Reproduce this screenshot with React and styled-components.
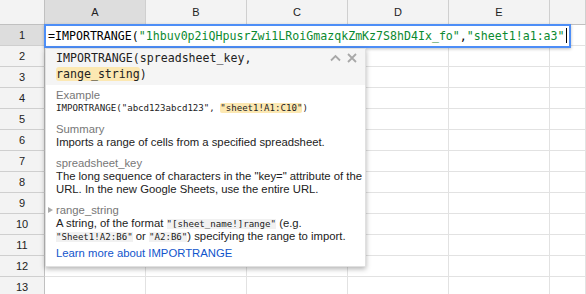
import React from 'react';
import styled, { createGlobalStyle } from 'styled-components';

const Global = createGlobalStyle`
  html, body { margin: 0; padding: 0; background: #fff; overflow: hidden; }
  body { font-family: "Liberation Sans", Arial, sans-serif; }
`;

const MONO = `"DejaVu Sans Mono", "Liberation Mono", monospace`;

const Sheet = styled.div`
  position: relative;
  width: 586px;
  height: 294px;
  overflow: hidden;
`;

const Grid = styled.div`
  display: grid;
  grid-template-columns: 45px repeat(5, 101px) 1fr;
  grid-template-rows: 25px;
  grid-auto-rows: 21px;
`;

const Corner = styled.div`
  box-sizing: border-box;
  background: #f3f3f3;
  border-right: 1px solid #c0c0c0;
  border-bottom: 1px solid #c0c0c0;
`;

const ColHead = styled.div`
  box-sizing: border-box;
  background: ${(p) => (p.$active ? '#dddddd' : '#f3f3f3')};
  border-right: 1px solid #cfcfcf;
  border-bottom: 1px solid #c0c0c0;
  display: flex;
  align-items: center;
  justify-content: center;
  font-size: 11px;
  color: #222;
`;

const RowHead = styled.div`
  box-sizing: border-box;
  background: ${(p) => (p.$active ? '#dddddd' : '#f3f3f3')};
  border-right: 1px solid #c0c0c0;
  border-bottom: 1px solid #cfcfcf;
  display: flex;
  align-items: center;
  justify-content: center;
  font-size: 11px;
  color: #222;
`;

const Cell = styled.div`
  box-sizing: border-box;
  border-right: 1px solid #e2e2e2;
  border-bottom: 1px solid #e2e2e2;
`;

const Editor = styled.div`
  position: absolute;
  left: 44px;
  top: 24px;
  width: 527px;
  height: 24px;
  box-sizing: border-box;
  border: 2px solid #4d8ef7;
  background: #fff;
  box-shadow: 0 1px 3px rgba(0, 0, 0, 0.25);
  padding-left: 2px;
  font-family: ${MONO};
  font-size: 11.6px;
  line-height: 20px;
  color: #000;
  white-space: nowrap;
`;

const Str = styled.span`
  color: #0b8a30;
`;

const Cursor = styled.span`
  display: inline-block;
  width: 1px;
  height: 15px;
  background: #000;
  vertical-align: -3px;
  margin-left: 1px;
`;

const Popover = styled.div`
  position: absolute;
  left: 45px;
  top: 48px;
  width: 321px;
  background: #fff;
  box-shadow: 0 2px 5px rgba(0, 0, 0, 0.3);
  border: 1px solid rgba(0, 0, 0, 0.12);
  box-sizing: border-box;
`;

const PopHeader = styled.div`
  display: flex;
  justify-content: space-between;
  align-items: flex-start;
  background: #f5f5f5;
  padding: 1px 8px 3px 10px;
`;

const Signature = styled.div`
  font-family: ${MONO};
  font-size: 11.6px;
  line-height: 16px;
  color: #222;
`;

const ParamHi = styled.span`
  background: #fce8b2;
  border-radius: 3px;
`;

const Controls = styled.div`
  display: flex;
  gap: 6px;
  align-items: center;
  padding-top: 3px;
`;

const Body = styled.div`
  padding: 4px 2px 6px 10px;
  display: flex;
  flex-direction: column;
  gap: 8px;
  font-size: 11.3px;
  line-height: 13px;
  color: #222;
`;

const Section = styled.div`
  position: relative;
  display: flex;
  flex-direction: column;
`;

const Label = styled.div`
  color: #777;
`;

const Text = styled.div`
  color: #222;
  white-space: nowrap;
`;

const CodeLine = styled.div`
  font-family: ${MONO};
  font-size: 9.1px;
  line-height: 13px;
  color: #222;
`;

const CodeHi = styled.span`
  background: #fce8b2;
  border-radius: 2px;
`;

const Code = styled.span`
  font-family: ${MONO};
  font-size: 9.1px;
  line-height: 1;
  background: #f1f1f1;
  color: #222;
`;

const Arrow = styled.span`
  position: absolute;
  left: -8px;
  top: 3px;
  width: 0;
  height: 0;
  border-top: 3.5px solid transparent;
  border-bottom: 3.5px solid transparent;
  border-left: 5px solid #aaa;
`;

const LearnMore = styled.a`
  color: #1155cc;
  text-decoration: none;
  margin-top: -4px;
`;

const cols = ['A', 'B', 'C', 'D', 'E', ''];

export default function App() {
  const rows = Array.from({ length: 13 }, (_, i) => i + 1);
  return (
    <Sheet>
      <Global />
      <Grid>
        <Corner />
        {cols.map((c, i) => (
          <ColHead key={c + i} $active={c === 'A'}>
            {c}
          </ColHead>
        ))}
        {rows.map((r) => (
          <React.Fragment key={r}>
            <RowHead $active={r === 1}>{r}</RowHead>
            {cols.map((c, i) => (
              <Cell key={i} />
            ))}
          </React.Fragment>
        ))}
      </Grid>

      <Editor>
        =IMPORTRANGE(<Str>"1hbuv0p2iQHpusrZwi1LRoiGmazqkZmKz7S8hD4Ix_fo"</Str>,
        <Str>"sheet1!a1:a3"</Str>
        <Cursor />
      </Editor>

      <Popover>
        <PopHeader>
          <Signature>
            IMPORTRANGE(spreadsheet_key,
            <br />
            <ParamHi>range_string</ParamHi>)
          </Signature>
          <Controls>
            <svg width="11" height="8" viewBox="0 0 11 8">
              <path d="M1 6.5 L5.5 2 L10 6.5" fill="none" stroke="#a8a8a8" strokeWidth="1.8" />
            </svg>
            <svg width="10" height="10" viewBox="0 0 10 10">
              <path d="M1 1 L9 9 M9 1 L1 9" fill="none" stroke="#a8a8a8" strokeWidth="1.8" />
            </svg>
          </Controls>
        </PopHeader>
        <Body>
          <Section>
            <Label>Example</Label>
            <CodeLine>
              IMPORTRANGE("abcd123abcd123", <CodeHi>"sheet1!A1:C10"</CodeHi>)
            </CodeLine>
          </Section>
          <Section>
            <Label>Summary</Label>
            <Text>Imports a range of cells from a specified spreadsheet.</Text>
          </Section>
          <Section>
            <Label>spreadsheet_key</Label>
            <Text>
              The long sequence of characters in the "key=" attribute of the
              <br />
              URL. In the new Google Sheets, use the entire URL.
            </Text>
          </Section>
          <Section>
            <Arrow />
            <Label>range_string</Label>
            <Text>
              A string, of the format <Code>"[sheet_name!]range"</Code> (e.g.
              <br />
              <Code>"Sheet1!A2:B6"</Code> or <Code>"A2:B6"</Code>) specifying the range to import.
            </Text>
          </Section>
          <LearnMore href="#">Learn more about IMPORTRANGE</LearnMore>
        </Body>
      </Popover>
    </Sheet>
  );
}
